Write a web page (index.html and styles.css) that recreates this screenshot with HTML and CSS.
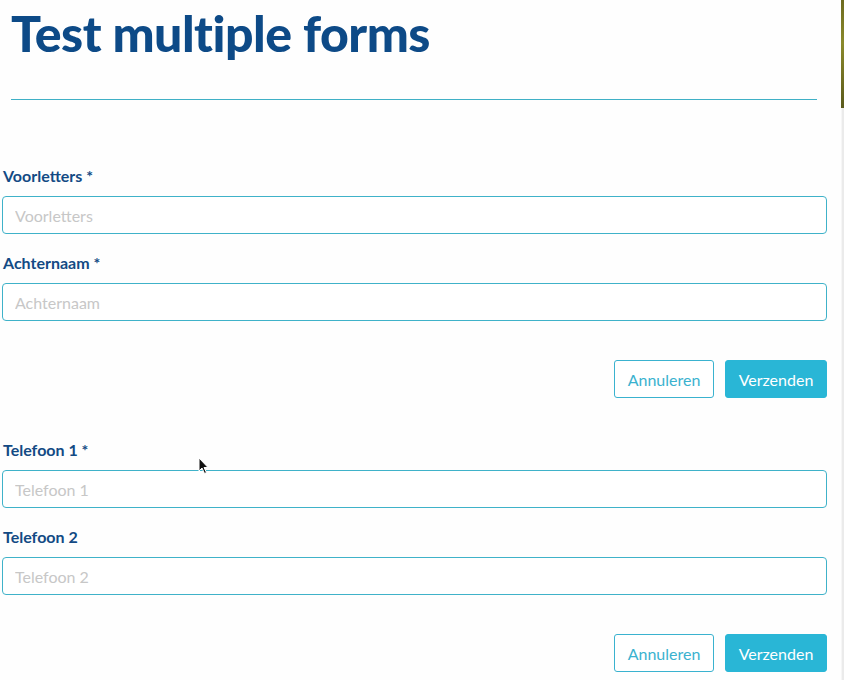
FILE: index.html
```html
<!DOCTYPE html>
<html lang="nl">
<head>
<meta charset="utf-8">
<title>Test multiple forms</title>
<link rel="stylesheet" href="styles.css">
</head>
<body>
<div class="page">
  <main class="content">
    <header class="page-header">
      <h1 class="title">Test multiple forms</h1>
      <div class="rule"></div>
    </header>

    <form class="form">
      <div class="group">
        <label class="label" for="f1">Voorletters *</label>
        <input class="input" id="f1" type="text" placeholder="Voorletters">
      </div>
      <div class="group">
        <label class="label" for="f2">Achternaam *</label>
        <input class="input" id="f2" type="text" placeholder="Achternaam">
      </div>
      <div class="actions">
        <button type="button" class="btn btn-outline">Annuleren</button>
        <button type="button" class="btn btn-primary">Verzenden</button>
      </div>
    </form>

    <form class="form">
      <div class="group">
        <label class="label" for="f3">Telefoon 1 *</label>
        <input class="input" id="f3" type="text" placeholder="Telefoon 1">
      </div>
      <div class="group">
        <label class="label" for="f4">Telefoon 2</label>
        <input class="input" id="f4" type="text" placeholder="Telefoon 2">
      </div>
      <div class="actions">
        <button type="button" class="btn btn-outline">Annuleren</button>
        <button type="button" class="btn btn-primary">Verzenden</button>
      </div>
    </form>

    <svg class="cursor" width="12" height="18" viewBox="0 0 12 18" aria-hidden="true">
      <path d="M1 1 L1 14 L4 11 L6.5 16.5 L8.5 15.5 L6 10.5 L10 10.5 Z" fill="#111" stroke="#fff" stroke-width="1"/>
    </svg>
  </main>
  <aside class="side">
    <div class="side-photo"></div>
  </aside>
</div>
</body>
</html>
```

FILE: styles.css
```css
* { box-sizing: border-box; }

html, body {
  margin: 0;
  padding: 0;
  background: #fefefe;
}

body {
  font-family: Lato, "Open Sans", "Liberation Sans", sans-serif;
  color: #134a84;
}

.page {
  display: flex;
  width: 844px;
  min-height: 680px;
}

.content {
  position: relative;
  width: 841px;
  padding: 3px 0 0 2px;
}

.side {
  width: 3px;
  background: linear-gradient(90deg, #f6f6f6 0, #f6f6f6 1px, #ebebeb 1px);
}

.side-photo {
  height: 108px;
  background: linear-gradient(180deg, #6d6a1f 0%, #8a8a2c 40%, #6f6d22 75%, #595a1c 100%);
}

.page-header {
  padding-left: 9px;
  width: 815px;
}

.title {
  margin: 0;
  font-size: 50px;
  line-height: 60px;
  font-weight: 900;
  color: #0d4a87;
  letter-spacing: -0.5px;
}

.rule {
  margin-top: 36px;
  height: 1px;
  background: #3fb0c6;
}

.form {
  width: 825px;
}

.page-header + .form {
  margin-top: 66px;
}

.group {
  display: flex;
  flex-direction: column;
  margin-bottom: 19px;
}

.label {
  display: block;
  height: 20px;
  line-height: 20px;
  font-size: 16px;
  font-weight: 700;
  color: #134a84;
  padding-left: 1px;
  margin-bottom: 10px;
}

.input {
  display: block;
  width: 825px;
  height: 38px;
  margin: 0;
  padding: 0 12px;
  border: 1px solid #3fb2c9;
  border-radius: 4px;
  background: #fff;
  font-family: Lato, "Open Sans", "Liberation Sans", sans-serif;
  font-size: 16px;
  color: #333;
  outline: none;
}

.input::placeholder {
  color: #c7c7c7;
}

.actions {
  display: flex;
  justify-content: flex-end;
  gap: 11px;
  margin-top: 39px;
  margin-bottom: 42px;
}

.btn {
  height: 38px;
  padding: 0 10px;
  border-radius: 3px;
  font-family: Lato, "Open Sans", "Liberation Sans", sans-serif;
  font-size: 16px;
  cursor: pointer;
}

.btn-outline {
  width: 100px;
  background: #fff;
  color: #3ab2cf;
  border: 1px solid #3ab2cf;
}

.btn-primary {
  width: 102px;
  background: #29b6d6;
  color: #fff;
  border: 1px solid #29b6d6;
}

.cursor {
  position: absolute;
  left: 198px;
  top: 457px;
}
```
